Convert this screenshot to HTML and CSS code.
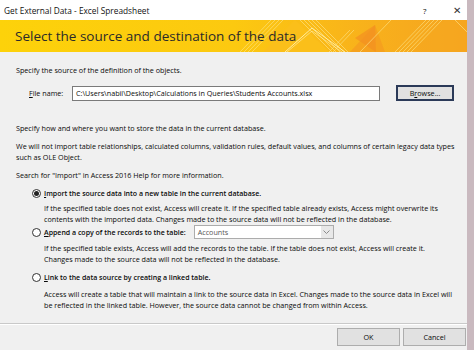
FILE: index.html
```html
<!DOCTYPE html>
<html lang="en">
<head>
  <meta charset="UTF-8">
  <title>Get External Data - Excel Spreadsheet</title>
  <link rel="stylesheet" href="styles.css">
</head>
<body>
  <div class="dialog">
    <div class="titlebar">
      <span class="title">Get External Data - Excel Spreadsheet</span>
      <span class="help">?</span>
      <span class="close">&#x2715;</span>
    </div>

    <div class="banner">
      <svg class="banner-art" width="467" height="32" viewBox="0 0 467 32" preserveAspectRatio="none">
        <defs>
          <linearGradient id="bg" x1="0" x2="1" y1="0" y2="0">
            <stop offset="0" stop-color="#fdd20a"/>
            <stop offset="0.5" stop-color="#fcc910"/>
            <stop offset="0.8" stop-color="#f8b01c"/>
            <stop offset="1" stop-color="#f5a31f"/>
          </linearGradient>
        </defs>
        <rect width="467" height="32" fill="url(#bg)"/>
        <polygon points="263,32 295,0 330,32" fill="#fbbf1a"/>
        <polygon points="350,32 375,5 385,32" fill="#f59e1f" opacity="0.8"/>
        <polygon points="355,18 375,5 376,32" fill="#f39021" opacity="0.7"/>
        <polygon points="410,32 445,0 467,0 467,32" fill="#f6a91f" opacity="0.6"/>
        <g stroke="#fde58a" stroke-width="0.7" opacity="0.9">
          <line x1="240" y1="32" x2="271" y2="0"/>
          <line x1="244" y1="32" x2="275" y2="0"/>
          <line x1="248" y1="32" x2="279" y2="0"/>
          <line x1="252" y1="32" x2="283" y2="0"/>
          <line x1="300" y1="0" x2="332" y2="32"/>
          <line x1="304" y1="0" x2="336" y2="32"/>
          <line x1="308" y1="0" x2="340" y2="32"/>
          <line x1="312" y1="0" x2="344" y2="32"/>
          <line x1="316" y1="0" x2="348" y2="32"/>
          <line x1="329" y1="32" x2="350" y2="10"/>
          <line x1="333" y1="32" x2="354" y2="10"/>
          <line x1="360" y1="32" x2="391" y2="0"/>
          <line x1="395" y1="32" x2="426" y2="0"/>
          <line x1="399" y1="32" x2="430" y2="0"/>
          <line x1="403" y1="32" x2="434" y2="0"/>
          <line x1="407" y1="32" x2="438" y2="0"/>
          <line x1="411" y1="32" x2="442" y2="0"/>
          <line x1="455" y1="0" x2="467" y2="12"/>
        </g>
        <polyline points="285,32 312,8 345,32" fill="none" stroke="#fff2b0" stroke-width="0.9"/>
        <polyline points="287,32 312,11 342,32" fill="none" stroke="#fff2b0" stroke-width="0.6"/>
      </svg>
      <span class="banner-text">Select the source and destination of the data</span>
    </div>

    <div class="content">
      <p class="line first">Specify the source of the definition of the objects.</p>

      <div class="file-row">
        <label class="file-label"><u>F</u>ile name:</label>
        <div class="file-input">C:\Users\nabil\Desktop\Calculations in Queries\Students Accounts.xlsx</div>
        <button class="btn browse">B<u>r</u>owse...</button>
      </div>

      <p class="line">Specify how and where you want to store the data in the current database.</p>
      <p class="line">We will not import table relationships, calculated columns, validation rules, default values, and columns of certain legacy data types<br>such as OLE Object.</p>
      <p class="line search">Search for "Import" in Access 2016 Help for more information.</p>

      <div class="option">
        <div class="option-head">
          <span class="radio checked"></span>
          <span class="option-label"><u>I</u>mport the source data into a new table in the current database.</span>
        </div>
        <p class="option-desc">If the specified table does not exist, Access will create it. If the specified table already exists, Access might overwrite its<br>contents with the imported data. Changes made to the source data will not be reflected in the database.</p>
      </div>

      <div class="option">
        <div class="option-head">
          <span class="radio"></span>
          <span class="option-label"><u>A</u>ppend a copy of the records to the table:</span>
          <div class="select">
            <span>Accounts</span>
            <span class="select-arrow">
              <svg width="7" height="4" viewBox="0 0 7 4"><polyline points="0.5,0.5 3.5,3.5 6.5,0.5" fill="none" stroke="#8a8a8a" stroke-width="1"/></svg>
            </span>
          </div>
        </div>
        <p class="option-desc second">If the specified table exists, Access will add the records to the table. If the table does not exist, Access will create it.<br>Changes made to the source data will not be reflected in the database.</p>
      </div>

      <div class="option last">
        <div class="option-head">
          <span class="radio"></span>
          <span class="option-label"><u>L</u>ink to the data source by creating a linked table.</span>
        </div>
        <p class="option-desc third">Access will create a table that will maintain a link to the source data in Excel. Changes made to the source data in Excel will<br>be reflected in the linked table. However, the source data cannot be changed from within Access.</p>
      </div>
    </div>

    <div class="footer">
      <button class="btn ok">OK</button>
      <button class="btn cancel">Cancel</button>
    </div>
  </div>
</body>
</html>
```

FILE: styles.css
```css
body {
  margin: 0;
  background-color: #c9b9bf;
  font-family: "Open Sans", "Noto Sans", sans-serif;
  font-size: 7.2px;
  color: #0a0a0a;
}

.dialog {
  width: 467px;
  height: 350px;
  background-color: #f0f0f0;
  display: flex;
  flex-direction: column;
  overflow: hidden;
}

.titlebar {
  flex-shrink: 0;
  height: 20px;
  background-color: #ffffff;
  display: flex;
  align-items: center;
  padding-left: 4px;
  box-sizing: border-box;
}

.title {
  font-size: 8.3px;
  flex: 1;
  color: #111;
}

.help {
  font-size: 8px;
  width: 10px;
  margin-right: 20px;
}

.close {
  font-size: 10px;
  color: #333;
  margin-right: 6px;
}

.banner {
  flex-shrink: 0;
  position: relative;
  height: 32px;
  display: flex;
  align-items: center;
}

.banner-art {
  position: absolute;
  left: 0;
  top: 0;
}

.banner-text {
  position: relative;
  padding-left: 15px;
  font-size: 13.5px;
  color: #2a2a2a;
}

.content {
  flex: 1;
  padding: 13px 0 0 16px;
}

.line {
  margin: 0 0 7px 0;
  line-height: 11px;
  white-space: nowrap;
}

.line.first {
  margin-bottom: 9px;
}

.line.search {
  margin-bottom: 5px;
}

.file-row {
  display: flex;
  align-items: center;
  height: 16px;
  padding-left: 13px;
  margin-bottom: 22px;
}

.file-label {
  width: 43px;
}

.file-input {
  width: 308px;
  height: 15px;
  box-sizing: border-box;
  border: 1px solid #7a7a7a;
  background-color: #ffffff;
  padding: 0 3px;
  line-height: 13px;
  white-space: nowrap;
  overflow: hidden;
  margin-right: 16px;
}

.btn {
  font-family: inherit;
  font-size: 7.2px;
  color: #0a0a0a;
  background-color: #e1e1e1;
  border: 1px solid #adadad;
  padding: 0;
}

.browse {
  width: 58px;
  height: 16px;
  border: 2px solid #2b3a58;
}

.option {
  padding-left: 16px;
}

.option.last {
  margin-top: 5px;
}

.option-head {
  display: flex;
  align-items: center;
  height: 14px;
}

.radio {
  flex-shrink: 0;
  width: 9px;
  height: 9px;
  border: 1px solid #333;
  border-radius: 50%;
  background-color: #ffffff;
  box-sizing: border-box;
  margin-right: 3px;
  display: flex;
  align-items: center;
  justify-content: center;
}

.radio.checked::after {
  content: "";
  width: 5px;
  height: 5px;
  border-radius: 50%;
  background-color: #222;
}

.option-label {
  font-weight: 600;
  font-size: 7px;
}

.select {
  margin-left: 8px;
  width: 140px;
  height: 14px;
  box-sizing: border-box;
  border: 1px solid #acacac;
  background-color: #ffffff;
  display: flex;
  align-items: center;
  justify-content: space-between;
  padding-left: 3px;
  color: #555;
}

.select-arrow {
  width: 12px;
  height: 12px;
  background-color: #e8e8e8;
  display: flex;
  align-items: center;
  justify-content: center;
}

.option-desc {
  margin: 3px 0 0 12px;
  line-height: 11px;
  white-space: nowrap;
}

.option-desc.second {
  margin-top: 4px;
}

.option-desc.third {
  margin-top: 5px;
}

.footer {
  flex-shrink: 0;
  height: 26px;
  border-top: 1px solid #c9c9c9;
  box-shadow: inset 0 1px 0 #ffffff;
  display: flex;
  align-items: center;
  justify-content: flex-end;
  padding-right: 1px;
}

.ok,
.cancel {
  width: 63px;
  height: 18px;
  margin-left: 3px;
}
```
